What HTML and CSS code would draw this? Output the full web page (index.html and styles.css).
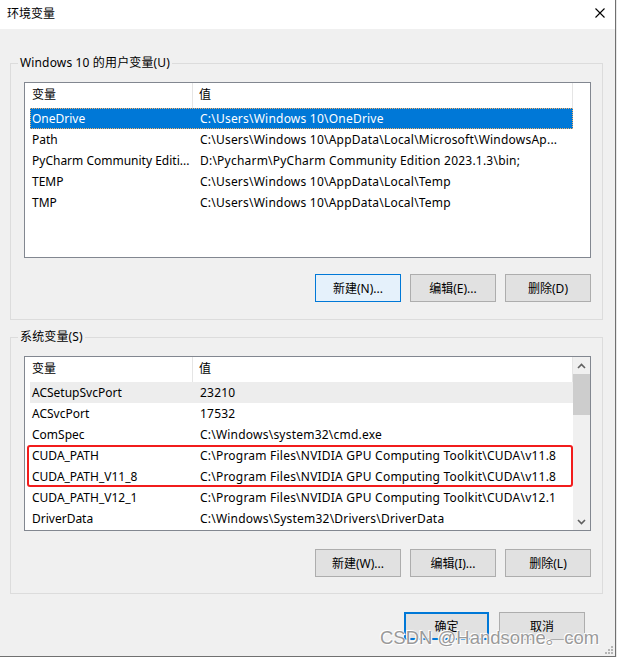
FILE: index.html
```html
<!DOCTYPE html>
<html lang="zh-CN">
<head>
<meta charset="utf-8">
<title>环境变量</title>
<link rel="stylesheet" href="styles.css">
</head>
<body>
<div class="window">
  <div class="titlebar">
    <span class="title">环境变量</span>
    <svg class="close" width="10" height="10" viewBox="0 0 10 10"><path d="M0.5 0.5L9.5 9.5M9.5 0.5L0.5 9.5" stroke="#000" stroke-width="1.1" fill="none"/></svg>
  </div>
  <div class="body">
    <fieldset class="group group-user">
      <legend class="legend">Windows 10 的用户变量(U)</legend>
      <div class="list list-user">
        <div class="list-content">
          <div class="header"><div class="hcell c1">变量</div><div class="hcell c2">值</div></div>
          <div class="row selected"><div class="cell c1">OneDrive</div><div class="cell c2">C:\Users\Windows 10\OneDrive</div></div>
          <div class="row"><div class="cell c1">Path</div><div class="cell c2">C:\Users\Windows 10\AppData\Local\Microsoft\WindowsAp...</div></div>
          <div class="row"><div class="cell c1">PyCharm Community Editi...</div><div class="cell c2">D:\Pycharm\PyCharm Community Edition 2023.1.3\bin;</div></div>
          <div class="row"><div class="cell c1">TEMP</div><div class="cell c2">C:\Users\Windows 10\AppData\Local\Temp</div></div>
          <div class="row"><div class="cell c1">TMP</div><div class="cell c2">C:\Users\Windows 10\AppData\Local\Temp</div></div>
        </div>
        <div class="noscroll"></div>
      </div>
      <div class="btns">
        <button class="btn btn-focus">新建(N)...</button>
        <button class="btn">编辑(E)...</button>
        <button class="btn">删除(D)</button>
      </div>
    </fieldset>

    <fieldset class="group group-sys">
      <legend class="legend">系统变量(S)</legend>
      <div class="list list-sys">
        <div class="list-content">
          <div class="header"><div class="hcell c1">变量</div><div class="hcell c2">值</div></div>
          <div class="row hover"><div class="cell c1">ACSetupSvcPort</div><div class="cell c2">23210</div></div>
          <div class="row"><div class="cell c1">ACSvcPort</div><div class="cell c2">17532</div></div>
          <div class="row"><div class="cell c1">ComSpec</div><div class="cell c2">C:\Windows\system32\cmd.exe</div></div>
          <div class="marked">
            <div class="row"><div class="cell c1">CUDA_PATH</div><div class="cell c2">C:\Program Files\NVIDIA GPU Computing Toolkit\CUDA\v11.8</div></div>
            <div class="row"><div class="cell c1">CUDA_PATH_V11_8</div><div class="cell c2">C:\Program Files\NVIDIA GPU Computing Toolkit\CUDA\v11.8</div></div>
          </div>
          <div class="row"><div class="cell c1">CUDA_PATH_V12_1</div><div class="cell c2">C:\Program Files\NVIDIA GPU Computing Toolkit\CUDA\v12.1</div></div>
          <div class="row"><div class="cell c1">DriverData</div><div class="cell c2">C:\Windows\System32\Drivers\DriverData</div></div>
        </div>
        <div class="scrollbar">
          <div class="sb-arrow"><svg width="9" height="6" viewBox="0 0 9 6"><path d="M1 5L4.5 1.5L8 5" stroke="#606060" stroke-width="1.6" fill="none"/></svg></div>
          <div class="sb-thumb"></div>
          <div class="sb-track"></div>
          <div class="sb-arrow"><svg width="9" height="6" viewBox="0 0 9 6"><path d="M1 1L4.5 4.5L8 1" stroke="#606060" stroke-width="1.6" fill="none"/></svg></div>
        </div>
      </div>
      <div class="btns btns-sys">
        <button class="btn">新建(W)...</button>
        <button class="btn">编辑(I)...</button>
        <button class="btn">删除(L)</button>
      </div>
    </fieldset>
  </div>
  <div class="footer">
    <button class="btn btn-ok">确定</button>
    <button class="btn">取消</button>
  </div>
  <div class="watermark">CSDN @Handsome。com</div>
  <svg class="grip" width="9" height="9" viewBox="0 0 9 9">
    <rect x="7" y="1" width="2" height="2" fill="#b5b5b5"/>
    <rect x="4" y="4" width="2" height="2" fill="#b5b5b5"/>
    <rect x="7" y="4" width="2" height="2" fill="#b5b5b5"/>
    <rect x="1" y="7" width="2" height="2" fill="#b5b5b5"/>
    <rect x="4" y="7" width="2" height="2" fill="#b5b5b5"/>
    <rect x="7" y="7" width="2" height="2" fill="#b5b5b5"/>
  </svg>
</div>
</body>
</html>
```

FILE: styles.css
```css
html, body {
  margin: 0;
  padding: 0;
  background: #e8e8e8;
}
body {
  font-family: "Noto Sans", "Noto Sans CJK SC", sans-serif;
  font-size: 12px;
  color: #000;
}
.window {
  position: relative;
  width: 616px;
  height: 657px;
  box-sizing: border-box;
  background: #f0f0f0;
  border-right: 1px solid #707070;
  border-bottom: 1px solid #707070;
  overflow: hidden;
}
.titlebar {
  height: 29px;
  background: #fff;
  display: flex;
  align-items: center;
  justify-content: space-between;
  padding: 0 10px 0 7px;
}
.title {
  font-size: 12px;
  line-height: 16px;
  margin-top: -2px;
}
.close {
  margin-top: -3px;
  display: block;
}
.body {
  padding-top: 26px;
}
.group {
  margin: 0 0 0 10px;
  width: 593px;
  box-sizing: border-box;
  border: 1px solid #dcdcdc;
  padding: 11px 11px 17px 13px;
  min-width: 0;
}
.group-sys {
  margin-top: 9px;
  padding-bottom: 16px;
}
.legend {
  padding: 0 2px;
  margin-left: -6px;
  line-height: 16px;
  font-size: 12px;
  letter-spacing: 0.15px;
}
.list {
  display: flex;
  height: 176px;
  box-sizing: border-box;
  border: 1px solid #828790;
  background: #fff;
  overflow: hidden;
}
.list-sys {
  height: 175px;
}
.list-content {
  flex: 1;
  min-width: 0;
  padding-left: 5px;
}
.noscroll {
  width: 17px;
  flex: none;
}
.header {
  display: grid;
  grid-template-columns: 163px 1fr;
  height: 25px;
}
.hcell {
  line-height: 24px;
  border-right: 1px solid #e5e5e5;
}
.hcell.c1 { padding-left: 2px; }
.hcell.c2 { padding-left: 6px; }
.row {
  display: grid;
  grid-template-columns: 163px 1fr;
  height: 21px;
  line-height: 21px;
  white-space: nowrap;
}
.cell {
  overflow: hidden;
}
.cell.c1 { padding-left: 2px; }
.cell.c2 {
  padding-left: 7px;
  letter-spacing: 0.22px;
}
.row.selected {
  background: #0078d7;
  color: #fff;
  outline: 1px dotted #f7b26a;
  outline-offset: -1px;
}
.row.hover {
  background: #ededed;
}
.marked {
  position: relative;
}
.marked::after {
  content: "";
  position: absolute;
  left: -3px;
  right: 0;
  top: 0;
  bottom: 0;
  border: 2px solid #f21c1c;
  border-radius: 3px;
}
.scrollbar {
  width: 17px;
  flex: none;
  background: #f0f0f0;
  display: flex;
  flex-direction: column;
}
.sb-arrow {
  height: 17px;
  display: flex;
  align-items: center;
  justify-content: center;
}
.sb-arrow svg { display: block; }
.sb-thumb {
  height: 41px;
  background: #cdcdcd;
}
.sb-track {
  flex: 1;
}
.btns {
  display: flex;
  justify-content: flex-end;
  gap: 9px;
  margin-top: 16px;
}
.btns-sys {
  margin-top: 18px;
}
.btn {
  width: 86px;
  height: 28px;
  box-sizing: border-box;
  margin: 0;
  padding: 0;
  font-family: inherit;
  font-size: 12px;
  color: #000;
  background: #e1e1e1;
  border: 1px solid #adadad;
  border-radius: 0;
}
.btn-focus {
  background: #e5f1fb;
  border-color: #0078d7;
}
.footer {
  display: flex;
  justify-content: flex-end;
  gap: 10px;
  margin-top: 18px;
  padding-right: 30px;
}
.btn-ok {
  width: 85px;
  border: 2px solid #0078d7;
}
.watermark {
  position: absolute;
  left: 380px;
  top: 627px;
  font-family: "Liberation Sans", "Noto Sans CJK SC", sans-serif;
  font-size: 18.5px;
  line-height: 22px;
  color: #9a9a9a;
  white-space: nowrap;
  text-shadow: 0 0 1px #fff, 0 0 2px #fff, 1px 1px 0 #fff, -1px -1px 0 #fff;
}
.grip {
  position: absolute;
  right: 2px;
  bottom: 2px;
  display: block;
}
```
